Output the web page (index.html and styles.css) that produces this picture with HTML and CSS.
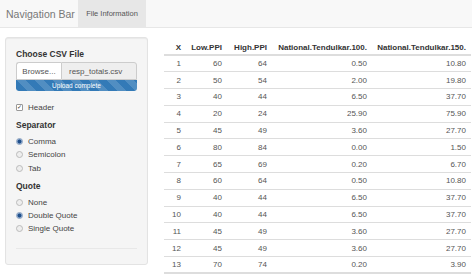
FILE: index.html
```html
<!DOCTYPE html>
<html>
<head>
<meta charset="utf-8">
<link rel="stylesheet" href="styles.css">
</head>
<body>
<nav class="navbar">
  <span class="brand">Navigation Bar</span>
  <span class="tab active">File Information</span>
</nav>
<div class="main">
  <aside class="well">
    <div class="label">Choose CSV File</div>
    <div class="file">
      <span class="browse">Browse...</span>
      <span class="fname">resp_totals.csv</span>
    </div>
    <div class="progress">Upload complete</div>
    <div class="check"><span class="cbox">✓</span>Header</div>
    <div class="label sec">Separator</div>
    <div class="radio"><span class="rad on"></span>Comma</div>
    <div class="radio"><span class="rad"></span>Semicolon</div>
    <div class="radio"><span class="rad"></span>Tab</div>
    <div class="label sec">Quote</div>
    <div class="radio"><span class="rad"></span>None</div>
    <div class="radio"><span class="rad on"></span>Double Quote</div>
    <div class="radio"><span class="rad"></span>Single Quote</div>
    <hr class="rule">
  </aside>
  <table class="data">
    <thead>
      <tr><th class="c1">X</th><th class="c2">Low.PPI</th><th class="c3">High.PPI</th><th class="c4">National.Tendulkar.100.</th><th class="c5">National.Tendulkar.150.</th></tr>
    </thead>
    <tbody>
      <tr><td>1</td><td>60</td><td>64</td><td>0.50</td><td>10.80</td></tr>
      <tr><td>2</td><td>50</td><td>54</td><td>2.00</td><td>19.80</td></tr>
      <tr><td>3</td><td>40</td><td>44</td><td>6.50</td><td>37.70</td></tr>
      <tr><td>4</td><td>20</td><td>24</td><td>25.90</td><td>75.90</td></tr>
      <tr><td>5</td><td>45</td><td>49</td><td>3.60</td><td>27.70</td></tr>
      <tr><td>6</td><td>80</td><td>84</td><td>0.00</td><td>1.50</td></tr>
      <tr><td>7</td><td>65</td><td>69</td><td>0.20</td><td>6.70</td></tr>
      <tr><td>8</td><td>60</td><td>64</td><td>0.50</td><td>10.80</td></tr>
      <tr><td>9</td><td>40</td><td>44</td><td>6.50</td><td>37.70</td></tr>
      <tr><td>10</td><td>40</td><td>44</td><td>6.50</td><td>37.70</td></tr>
      <tr><td>11</td><td>45</td><td>49</td><td>3.60</td><td>27.70</td></tr>
      <tr><td>12</td><td>45</td><td>49</td><td>3.60</td><td>27.70</td></tr>
      <tr><td>13</td><td>70</td><td>74</td><td>0.20</td><td>3.90</td></tr>
    </tbody>
  </table>
</div>
</body>
</html>
```
FILE: styles.css
```css
* { box-sizing: border-box; }
html, body { margin: 0; padding: 0; background: #fff; }
body {
  font-family: "Liberation Sans", Arial, sans-serif;
  color: #333;
  width: 474px;
  height: 275px;
  overflow: hidden;
}
.navbar {
  display: flex;
  align-items: stretch;
  height: 28px;
  width: 472px;
  background: #f8f8f8;
  border-bottom: 1px solid #e7e7e7;
}
.brand {
  display: flex;
  align-items: center;
  padding: 0 0 0 6px;
  width: 78px;
  font-size: 10.5px;
  color: #777;
  white-space: nowrap;
}
.tab {
  display: flex;
  align-items: center;
  justify-content: center;
  width: 68px;
  font-size: 7.5px;
  color: #555;
}
.tab.active { background: #e7e7e7; }
.main {
  display: flex;
  align-items: flex-start;
  padding: 9px 0 0 5px;
  gap: 16px;
}
.well {
  width: 143px;
  height: 228px;
  background: #f5f5f5;
  border: 1px solid #e3e3e3;
  border-radius: 3px;
  padding: 10px 10px 0 10px;
  box-shadow: inset 0 1px 1px rgba(0,0,0,0.05);
}
.label {
  font-weight: bold;
  font-size: 8.5px;
  color: #333;
  height: 14px;
  line-height: 12px;
}
.file {
  display: flex;
  height: 18px;
  font-size: 8px;
  color: #555;
}
.browse {
  width: 45px;
  display: flex;
  align-items: center;
  justify-content: center;
  background: #fff;
  border: 1px solid #ccc;
  border-right: none;
  border-radius: 3px 0 0 0;
}
.fname {
  flex: 1;
  display: flex;
  align-items: center;
  padding-left: 7px;
  background: #eee;
  border: 1px solid #ccc;
  border-radius: 0 3px 0 0;
}
.progress {
  height: 11px;
  font-size: 6.5px;
  line-height: 11px;
  color: #fff;
  text-align: center;
  border-radius: 0 0 3px 3px;
  background-color: #337ab7;
  background-image: linear-gradient(45deg, rgba(255,255,255,.15) 25%, transparent 25%, transparent 50%, rgba(255,255,255,.15) 50%, rgba(255,255,255,.15) 75%, transparent 75%, transparent);
  background-size: 18px 18px;
  margin-bottom: 10px;
}
.check, .radio {
  display: flex;
  align-items: center;
  font-size: 8px;
  color: #444;
  height: 13.2px;
  gap: 5px;
}
.check { margin-bottom: 5px; }
.cbox {
  width: 7px;
  height: 7px;
  border: 1px solid #999;
  background: #fff;
  font-size: 6px;
  line-height: 5px;
  text-align: center;
  color: #333;
  border-radius: 1px;
}
.rad {
  width: 7px;
  height: 7px;
  border-radius: 50%;
  border: 1px solid #bbb;
  background: #eee;
}
.rad.on {
  background: radial-gradient(circle, #1f4f8a 0 1.6px, #7b9cc7 2.2px, #cfd9e8 3px);
  border-color: #8aa0be;
}
.label.sec { margin-top: 5px; margin-bottom: 2px; }
.rule {
  border: none;
  border-top: 1px solid #e8e8e8;
  margin: 13px 0 0 0;
}
.data {
  border-collapse: collapse;
  table-layout: fixed;
  width: 307px;
  margin-top: 3px;
  font-size: 8px;
}
.data th {
  font-weight: bold;
  color: #333;
  height: 15px;
  text-align: right;
  padding: 0 5px 0 0;
  border-bottom: 2px solid #ddd;
  white-space: nowrap;
  font-size: 8px;
}
.data td {
  height: 16.8px;
  text-align: right;
  padding: 0 5px 0 0;
  color: #555;
  border-top: 1px solid #ddd;
}
.data tbody tr:last-child td { border-bottom: 2px solid #ddd; }
.c1 { width: 22px; }
.c2 { width: 41px; }
.c3 { width: 45px; }
.c4 { width: 100px; }
.c5 { width: 99px; }
```
